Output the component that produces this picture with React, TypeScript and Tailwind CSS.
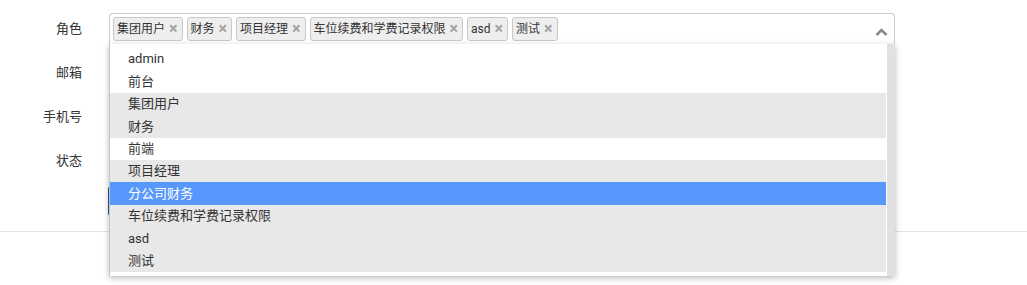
import React from "react";

const font = { fontFamily: 'Roboto, "Noto Sans CJK SC", sans-serif' };

const tags = ["集团用户", "财务", "项目经理", "车位续费和学费记录权限", "asd", "测试"];

const options = [
  { label: "admin", state: "none" },
  { label: "前台", state: "none" },
  { label: "集团用户", state: "selected" },
  { label: "财务", state: "selected" },
  { label: "前端", state: "none" },
  { label: "项目经理", state: "selected" },
  { label: "分公司财务", state: "active" },
  { label: "车位续费和学费记录权限", state: "selected" },
  { label: "asd", state: "selected" },
  { label: "测试", state: "selected" },
];

function Label({ children }: { children: React.ReactNode }) {
  return (
    <div className="w-[82px] shrink-0 text-right text-[13px] text-[#333]">
      {children}
    </div>
  );
}

function RoleSelect() {
  return (
    <div className="relative ml-[27px] w-[786px]">
      {/* selection box */}
      <div className="flex h-[31px] items-start rounded-t-[4px] border border-b-0 border-[#cccccc] bg-white pl-[3px] pt-[3px]">
        <div className="flex flex-1 flex-wrap gap-[4px]">
          {tags.map((t) => (
            <span
              key={t}
              className="flex h-[24px] items-center rounded-[3px] border border-[#c8c8c8] bg-[#eeeeee] pl-[3px] pr-[4px] text-[12px] leading-[22px] text-[#333]"
            >
              {t}
              <span className="ml-[4px] text-[16px] font-bold leading-none text-[#a3a3a3]">×</span>
            </span>
          ))}
        </div>
        <svg width="13" height="8" viewBox="0 0 13 8" className="mr-[6px] mt-[11px] shrink-0">
          <polyline points="1.5,7 6.5,2 11.5,7" fill="none" stroke="#8a8a8a" strokeWidth="2.6" />
        </svg>
      </div>

      {/* dropdown */}
      <div className="absolute left-0 top-[31px] z-10 flex h-[232px] w-[786px] bg-white shadow-[0_2px_6px_rgba(0,0,0,0.28)]">
        <div className="flex-1 border-l border-[#c4c4c4] pb-[4px] pr-[1px] pt-[4px]">
          {options.map((o) => (
            <div
              key={o.label}
              className={
                "flex h-[22.4px] items-center pl-[18px] text-[13px] " +
                (o.state === "active"
                  ? "bg-[#5897fb] text-white"
                  : o.state === "selected"
                  ? "bg-[#e8e8e8] text-[#333]"
                  : "bg-white text-[#333]")
              }
            >
              {o.label}
            </div>
          ))}
        </div>
        <div className="w-[8px] bg-[#e1e1e1]" />
      </div>
    </div>
  );
}

function Field() {
  return <div className="ml-[27px] h-[31px] w-[786px] rounded-[4px] border border-[#cccccc] bg-white" />;
}

export default function App() {
  return (
    <div className="h-[285px] w-full overflow-hidden bg-white" style={font}>
      <div className="h-[232px] border-b border-[#e2e2e2] pt-[13px]">
        <div className="flex items-center">
          <Label>角色</Label>
          <RoleSelect />
        </div>
        <div className="mt-[13px] flex items-center">
          <Label>邮箱</Label>
          <Field />
        </div>
        <div className="mt-[13px] flex items-center">
          <Label>手机号</Label>
          <Field />
        </div>
        <div className="mt-[13px] flex items-center">
          <Label>状态</Label>
          <Field />
        </div>
        <div className="ml-[108px] mt-[10px] h-[30px] w-[70px] rounded-[3px] bg-[#1f5b93]" />
      </div>
    </div>
  );
}
